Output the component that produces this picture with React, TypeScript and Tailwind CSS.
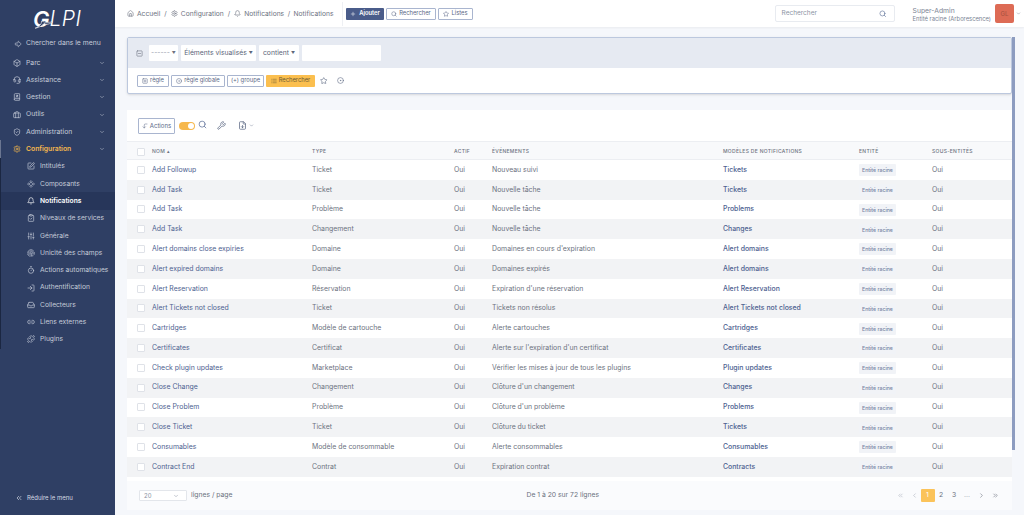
import {
  ArrowBigRight, BookUser, Box, Briefcase, Bell, ChevronDown, ChevronLeft, ChevronRight, ChevronsLeft, ChevronsRight,
  CircleDot, ClipboardCheck, CornerLeftDown, FileDown, Fingerprint, Headset, Home, Inbox, Link2, List, LogIn, Plus,
  Puzzle, Search, Settings, ShieldCheck, SlidersVertical, SquarePen, SquarePlus, Star, Component, Timer, Wrench, SquareMinus,
} from 'lucide-react';
import type { ComponentType } from 'react';

type IconType = ComponentType<{ className?: string; strokeWidth?: number }>;

const mainMenu: { label: string; icon: IconType }[] = [
  { label: 'Parc', icon: Box },
  { label: 'Assistance', icon: Headset },
  { label: 'Gestion', icon: BookUser },
  { label: 'Outils', icon: Briefcase },
  { label: 'Administration', icon: ShieldCheck },
];

const subMenu: { label: string; icon: IconType; active?: boolean }[] = [
  { label: 'Intitulés', icon: SquarePen },
  { label: 'Composants', icon: Component },
  { label: 'Notifications', icon: Bell, active: true },
  { label: 'Niveaux de services', icon: ClipboardCheck },
  { label: 'Générale', icon: SlidersVertical },
  { label: 'Unicité des champs', icon: Fingerprint },
  { label: 'Actions automatiques', icon: Timer },
  { label: 'Authentification', icon: LogIn },
  { label: 'Collecteurs', icon: Inbox },
  { label: 'Liens externes', icon: Link2 },
  { label: 'Plugins', icon: Puzzle },
];

const rows = [
  ['Add Followup', 'Ticket', 'Nouveau suivi', 'Tickets'],
  ['Add Task', 'Ticket', 'Nouvelle tâche', 'Tickets'],
  ['Add Task', 'Problème', 'Nouvelle tâche', 'Problems'],
  ['Add Task', 'Changement', 'Nouvelle tâche', 'Changes'],
  ['Alert domains close expiries', 'Domaine', "Domaines en cours d'expiration", 'Alert domains'],
  ['Alert expired domains', 'Domaine', 'Domaines expirés', 'Alert domains'],
  ['Alert Reservation', 'Réservation', "Expiration d'une réservation", 'Alert Reservation'],
  ['Alert Tickets not closed', 'Ticket', 'Tickets non résolus', 'Alert Tickets not closed'],
  ['Cartridges', 'Modèle de cartouche', 'Alerte cartouches', 'Cartridges'],
  ['Certificates', 'Certificat', "Alerte sur l'expiration d'un certificat", 'Certificates'],
  ['Check plugin updates', 'Marketplace', 'Vérifier les mises à jour de tous les plugins', 'Plugin updates'],
  ['Close Change', 'Changement', "Clôture d'un changement", 'Changes'],
  ['Close Problem', 'Problème', "Clôture d'un problème", 'Problems'],
  ['Close Ticket', 'Ticket', 'Clôture du ticket', 'Tickets'],
  ['Consumables', 'Modèle de consommable', 'Alerte consommables', 'Consumables'],
  ['Contract End', 'Contrat', 'Expiration contrat', 'Contracts'],
];

const colClass = {
  check: 'w-[15px] shrink-0',
  name: 'w-[160px] shrink-0',
  type: 'w-[142px] shrink-0',
  actif: 'w-[38px] shrink-0',
  events: 'w-[231px] shrink-0',
  models: 'w-[136px] shrink-0',
  entity: 'w-[73px] shrink-0',
};

function Logo() {
  return (
    <div className="relative flex h-[36px] items-center pt-[1px] pl-[33px] text-white italic">
      <span className="text-[22px] leading-none font-semibold">G</span>
      <span className="text-[21px] leading-none font-light tracking-[0.5px]">LPI</span>
      <svg viewBox="0 0 24 10" className="absolute top-[21px] left-[34px] h-[8px] w-[20px]">
        <path d="M1 9 C6 8 10 6 12 3 C15 5 19 4 23 1 C18 2 13 2 9 0 C9 4 6 7 1 9 Z" fill="#2f3f64" stroke="#ffffff" strokeWidth="0.8" />
      </svg>
    </div>
  );
}

function Sidebar() {
  return (
    <aside className="flex h-[515px] w-[115px] shrink-0 flex-col bg-[#2f3f64] text-[#c6ccd9]">
      <Logo />
      <div className="flex h-[15px] items-center gap-[4px] pl-[14px] text-[6.8px]">
        <ArrowBigRight className="h-[8px] w-[8px]" />
        Chercher dans le menu
      </div>
      <nav className="mt-[3px] flex flex-col">
        {mainMenu.map(({ label, icon: Icon }) => (
          <div key={label} className="flex h-[17.3px] items-center pr-[10px] pl-[13px] text-[6.8px]">
            <Icon className="mr-[5px] h-[8px] w-[8px]" />
            {label}
            <ChevronDown className="ml-auto h-[6px] w-[6px]" />
          </div>
        ))}
        <div className="flex h-[17.3px] items-center border-l-[1px] border-[#6b7691] pr-[10px] pl-[12px] text-[6.8px] font-semibold text-[#f6b84d]">
          <Settings className="mr-[5px] h-[8px] w-[8px]" />
          Configuration
          <ChevronDown className="ml-auto h-[6px] w-[6px] text-[#c6ccd9]" />
        </div>
        <div className="flex flex-col border-l-[1px] border-[#1b2742] pb-[1px]">
          {subMenu.map(({ label, icon: Icon, active }) => (
            <div
              key={label}
              className={
                active
                  ? 'flex h-[17.3px] items-center gap-[5px] bg-[#27365a] pl-[26px] text-[6.7px] font-semibold text-white'
                  : 'flex h-[17.3px] items-center gap-[5px] pl-[26px] text-[6.7px]'
              }
            >
              <Icon className="h-[8px] w-[8px]" />
              {label}
            </div>
          ))}
        </div>
      </nav>
      <div className="mt-auto mb-[13px] flex items-center gap-[4px] pl-[15px] text-[6px] text-[#d5d9e3]">
        <ChevronsLeft className="h-[8px] w-[8px]" />
        Réduire le menu
      </div>
    </aside>
  );
}

function Header() {
  return (
    <header className="flex h-[27px] shrink-0 items-center bg-white pr-[3px] pl-[12px] shadow-[0_1px_2px_rgba(0,0,0,0.05)]">
      <div className="flex w-[215px] shrink-0 items-center gap-[3px] pt-[1px] text-[6.7px] text-[#6c7280]">
        <Home className="h-[7px] w-[7px]" />
        <span>Accueil</span>
        <span className="mx-[1px]">/</span>
        <Settings className="h-[7px] w-[7px]" />
        <span>Configuration</span>
        <span className="mx-[1px]">/</span>
        <Bell className="h-[7px] w-[7px]" />
        <span>Notifications</span>
        <span className="mx-[0.5px]">/</span>
        <span>Notifications</span>
      </div>
      <div className="h-[24px] w-px bg-[#eef0f4]" />
      <div className="ml-[3px] flex items-center gap-[2px] text-[5.8px]">
        <span className="flex h-[12px] w-[38px] items-center justify-center gap-[3px] rounded-[1px] bg-[#4a5c8a] font-semibold text-white">
          <Plus className="h-[6px] w-[6px]" />
          Ajouter
        </span>
        <span className="flex h-[12px] w-[50px] items-center justify-center gap-[2px] rounded-[1px] border border-[#a9b5cf] text-[#5a6785]">
          <Search className="h-[6px] w-[6px]" />
          Rechercher
        </span>
        <span className="flex h-[12px] w-[35px] items-center justify-center gap-[2px] rounded-[1px] border border-[#a9b5cf] text-[#5a6785]">
          <Star className="h-[6px] w-[6px]" />
          Listes
        </span>
      </div>
      <div className="ml-auto flex h-[17px] w-[120px] items-center justify-between rounded-[2px] border border-[#e8ebf0] pr-[7px] pl-[6px] text-[6.5px] text-[#8b93a3]">
        Rechercher
        <Search className="h-[7.5px] w-[7.5px] text-[#5f7299]" />
      </div>
      <div className="ml-[18px] flex flex-col text-[#7b8494]">
        <span className="text-[6.8px] leading-[9px]">Super-Admin</span>
        <span className="text-[5.8px] leading-[7px] whitespace-nowrap">Entité racine (Arborescence)</span>
      </div>
      <span className="ml-[4px] flex h-[19px] w-[19px] items-center justify-center rounded-[2px] bg-[#dd6b55] text-[6px] text-[#a5503f]">
        GL
      </span>
      <ChevronDown className="ml-[2px] h-[5px] w-[5px] text-[#6c7280]" />
    </header>
  );
}

function FilterPanel() {
  return (
    <section className="ml-[12px] h-[57px] w-[885px] shrink-0 rounded-[2px] border border-[#bcc8de] bg-white text-[#5c6679] shadow-sm">
      <div className="flex h-[30px] items-center bg-[#e6eaf2] pl-[8px] text-[6.8px]">
        <SquareMinus className="h-[7px] w-[7px] text-[#6c7280]" />
        <div className="ml-[6px] flex gap-[3px]">
          <span className="flex h-[16px] w-[29px] items-center justify-center gap-[2px] rounded-[1px] bg-white text-[#98a0ae]">
            ------ <span className="text-[4px] text-[#6c7280]">▼</span>
          </span>
          <span className="flex h-[16px] w-[75px] items-center justify-center gap-[2px] rounded-[1px] bg-white">
            Éléments visualisés <span className="text-[4px]">▼</span>
          </span>
          <span className="flex h-[16px] w-[40px] items-center justify-center gap-[2px] rounded-[1px] bg-white">
            contient <span className="text-[4px]">▼</span>
          </span>
          <span className="h-[16px] w-[79px] rounded-[1px] bg-white" />
        </div>
      </div>
      <div className="flex h-[25px] items-center gap-[2px] pl-[9px] text-[5.8px] text-[#5a6785]">
        <span className="flex h-[12px] w-[32px] items-center justify-center gap-[2px] rounded-[1px] border border-[#a9b5cf]">
          <SquarePlus className="h-[6px] w-[6px]" />
          règle
        </span>
        <span className="flex h-[12px] w-[54px] items-center justify-center gap-[2px] rounded-[1px] border border-[#a9b5cf]">
          <CircleDot className="h-[6px] w-[6px]" />
          règle globale
        </span>
        <span className="flex h-[12px] w-[37px] items-center justify-center rounded-[1px] border border-[#a9b5cf]">
          (+) groupe
        </span>
        <span className="flex h-[12px] w-[49px] items-center justify-center gap-[2px] rounded-[1px] bg-[#fbbf4f] text-[#6a5a33]">
          <List className="h-[6px] w-[6px]" />
          Rechercher
        </span>
        <Star className="ml-[3px] h-[7.5px] w-[7.5px] text-[#5f6b85]" />
        <CircleDot className="ml-[7px] h-[7px] w-[7px] text-[#5f6b85]" />
      </div>
    </section>
  );
}

function HeaderCell({ className, label }: { className: string; label: string }) {
  return <div className={className}>{label}</div>;
}

function ResultTable() {
  return (
    <section className="mt-[16px] ml-[12px] h-[371px] w-[885px] shrink-0 overflow-hidden bg-white">
      <div className="flex h-[31px] items-center pl-[11px]">
        <span className="flex h-[16px] w-[37px] items-center justify-center gap-[2px] rounded-[1px] border border-[#a9b5cf] text-[6px] text-[#5a6785]">
          <CornerLeftDown className="h-[6px] w-[6px]" />
          Actions
        </span>
        <span className="ml-[4px] flex h-[8px] w-[16px] items-center justify-end rounded-full bg-[#f6b84d] pr-[1px]">
          <span className="h-[6px] w-[6px] rounded-full bg-white" />
        </span>
        <Search className="mb-[3px] ml-[3px] h-[9px] w-[9px] text-[#5f7299]" />
        <Wrench className="ml-[10px] h-[9px] w-[9px] text-[#5f6b85]" />
        <FileDown className="ml-[12px] h-[9px] w-[9px] text-[#5f6b85]" />
        <ChevronDown className="ml-[2px] h-[5px] w-[5px] text-[#5f6b85]" />
      </div>
      <div className="flex h-[19px] items-center border-y border-[#eceef2] bg-[#f8f9fb] pt-[2px] pl-[10px] text-[5px] font-medium tracking-[0.3px] text-[#6c7280]">
        <div className={colClass.check}>
          <span className="block h-[8px] w-[8px] rounded-[1px] border border-[#dfe2e8] bg-white" />
        </div>
        <HeaderCell className={colClass.name} label="NOM ▴" />
        <HeaderCell className={colClass.type} label="TYPE" />
        <HeaderCell className={colClass.actif} label="ACTIF" />
        <HeaderCell className={colClass.events} label="ÉVÉNEMENTS" />
        <HeaderCell className={colClass.models} label="MODÈLES DE NOTIFICATIONS" />
        <HeaderCell className={colClass.entity} label="ENTITÉ" />
        <HeaderCell className="" label="SOUS-ENTITÉS" />
      </div>
      {rows.map(([name, type, event, model], i) => (
        <div
          key={`${name}-${type}`}
          className={
            i % 2 === 0
              ? 'flex h-[19.8px] items-center bg-white pl-[10px] text-[6.9px] text-[#6c7280]'
              : 'flex h-[19.8px] items-center bg-[#f2f3f5] pl-[10px] text-[6.9px] text-[#6c7280]'
          }
        >
          <div className={colClass.check}>
            <span className="block h-[8px] w-[8px] rounded-[1px] border border-[#dfe2e8] bg-white" />
          </div>
          <div className={`${colClass.name} text-[#4d6190]`}>{name}</div>
          <div className={colClass.type}>{type}</div>
          <div className={colClass.actif}>Oui</div>
          <div className={colClass.events}>{event}</div>
          <div className={`${colClass.models} font-medium text-[#4d6190]`}>{model}</div>
          <div className={`${colClass.entity} mt-[1px]`}>
            <span className="rounded-[1px] bg-[#f1f3f7] px-[3px] py-[3px] text-[5.2px] font-medium text-[#7584a3]">
              Entité racine
            </span>
          </div>
          <div>Oui</div>
        </div>
      ))}
    </section>
  );
}

function Pagination() {
  return (
    <div className="ml-[12px] flex h-[29px] w-[885px] items-center bg-[#fafbfd] pr-[13.5px] pl-[12px] text-[6.8px] text-[#6c7280]">
      <span className="flex h-[11px] w-[48px] items-center justify-between rounded-[1px] border border-[#e3e6eb] bg-white pr-[7px] pl-[4px] text-[6px] text-[#8b93a3]">
        20
        <ChevronDown className="h-[6px] w-[6px]" />
      </span>
      <span className="ml-[4px]">lignes / page</span>
      <span className="ml-[294px]">De 1 à 20 sur 72 lignes</span>
      <div className="ml-auto flex items-center">
        <ChevronsLeft className="h-[7px] w-[7px] text-[#aeb4c0]" />
        <ChevronLeft className="ml-[7px] h-[7px] w-[7px] text-[#aeb4c0]" />
        <span className="ml-[3px] flex h-[13px] w-[14px] items-center justify-center rounded-[1px] bg-[#fbc35a] text-white">1</span>
        <span className="ml-[2px] w-[9px] text-center">2</span>
        <span className="ml-[4px] w-[9px] text-center">3</span>
        <span className="ml-[4px] w-[9px] text-center text-[#aeb4c0]">...</span>
        <ChevronRight className="ml-[6px] h-[7px] w-[7px]" />
        <ChevronsRight className="ml-[7px] h-[7px] w-[7px]" />
      </div>
    </div>
  );
}

export default function App() {
  return (
    <div className="flex h-[515px] w-[1024px] overflow-hidden bg-[#f5f7fb] font-['Inter',sans-serif]">
      <Sidebar />
      <main className="relative flex min-w-0 flex-1 flex-col">
        <Header />
        <div className="h-[10px] shrink-0" />
        <FilterPanel />
        <ResultTable />
        <Pagination />
        {/* scrollbar thumb */}
        <div className="absolute top-[37px] left-[897px] h-[413px] w-[2.5px] bg-[#8d9cc0]" />
      </main>
    </div>
  );
}
